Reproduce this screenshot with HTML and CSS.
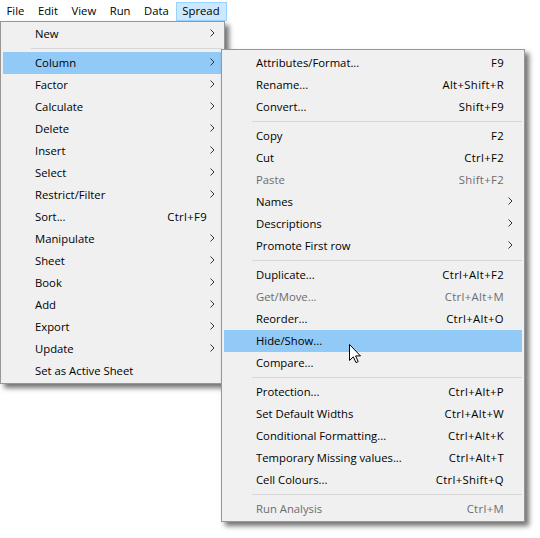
FILE: index.html
```html
<!DOCTYPE html>
<html>
<head>
<meta charset="utf-8">
<link rel="stylesheet" href="styles.css">
</head>
<body>
<div class="menubar">
  <div class="mb-item">File</div>
  <div class="mb-item">Edit</div>
  <div class="mb-item">View</div>
  <div class="mb-item">Run</div>
  <div class="mb-item">Data</div>
  <div class="mb-item active">Spread</div>
</div>

<div class="menu main">
  <div class="row"><span class="label">New</span><svg class="arrow" viewBox="0 0 5 8"><path d="M0.5 0.5 L4 4 L0.5 7.5"/></svg></div>
  <div class="sep"></div>
  <div class="row hl"><span class="label">Column</span><svg class="arrow" viewBox="0 0 5 8"><path d="M0.5 0.5 L4 4 L0.5 7.5"/></svg></div>
  <div class="row"><span class="label">Factor</span><svg class="arrow" viewBox="0 0 5 8"><path d="M0.5 0.5 L4 4 L0.5 7.5"/></svg></div>
  <div class="row"><span class="label">Calculate</span><svg class="arrow" viewBox="0 0 5 8"><path d="M0.5 0.5 L4 4 L0.5 7.5"/></svg></div>
  <div class="row"><span class="label">Delete</span><svg class="arrow" viewBox="0 0 5 8"><path d="M0.5 0.5 L4 4 L0.5 7.5"/></svg></div>
  <div class="row"><span class="label">Insert</span><svg class="arrow" viewBox="0 0 5 8"><path d="M0.5 0.5 L4 4 L0.5 7.5"/></svg></div>
  <div class="row"><span class="label">Select</span><svg class="arrow" viewBox="0 0 5 8"><path d="M0.5 0.5 L4 4 L0.5 7.5"/></svg></div>
  <div class="row"><span class="label">Restrict/Filter</span><svg class="arrow" viewBox="0 0 5 8"><path d="M0.5 0.5 L4 4 L0.5 7.5"/></svg></div>
  <div class="row"><span class="label">Sort...</span><span class="key">Ctrl+F9</span></div>
  <div class="row"><span class="label">Manipulate</span><svg class="arrow" viewBox="0 0 5 8"><path d="M0.5 0.5 L4 4 L0.5 7.5"/></svg></div>
  <div class="row"><span class="label">Sheet</span><svg class="arrow" viewBox="0 0 5 8"><path d="M0.5 0.5 L4 4 L0.5 7.5"/></svg></div>
  <div class="row"><span class="label">Book</span><svg class="arrow" viewBox="0 0 5 8"><path d="M0.5 0.5 L4 4 L0.5 7.5"/></svg></div>
  <div class="row"><span class="label">Add</span><svg class="arrow" viewBox="0 0 5 8"><path d="M0.5 0.5 L4 4 L0.5 7.5"/></svg></div>
  <div class="row"><span class="label">Export</span><svg class="arrow" viewBox="0 0 5 8"><path d="M0.5 0.5 L4 4 L0.5 7.5"/></svg></div>
  <div class="row"><span class="label">Update</span><svg class="arrow" viewBox="0 0 5 8"><path d="M0.5 0.5 L4 4 L0.5 7.5"/></svg></div>
  <div class="row"><span class="label">Set as Active Sheet</span></div>
</div>

<div class="menu sub">
  <div class="row"><span class="label">Attributes/Format...</span><span class="key">F9</span></div>
  <div class="row"><span class="label">Rename...</span><span class="key">Alt+Shift+R</span></div>
  <div class="row"><span class="label">Convert...</span><span class="key">Shift+F9</span></div>
  <div class="sep"></div>
  <div class="row"><span class="label">Copy</span><span class="key">F2</span></div>
  <div class="row"><span class="label">Cut</span><span class="key">Ctrl+F2</span></div>
  <div class="row dis"><span class="label">Paste</span><span class="key">Shift+F2</span></div>
  <div class="row"><span class="label">Names</span><svg class="arrow" viewBox="0 0 5 8"><path d="M0.5 0.5 L4 4 L0.5 7.5"/></svg></div>
  <div class="row"><span class="label">Descriptions</span><svg class="arrow" viewBox="0 0 5 8"><path d="M0.5 0.5 L4 4 L0.5 7.5"/></svg></div>
  <div class="row"><span class="label">Promote First row</span><svg class="arrow" viewBox="0 0 5 8"><path d="M0.5 0.5 L4 4 L0.5 7.5"/></svg></div>
  <div class="sep"></div>
  <div class="row"><span class="label">Duplicate...</span><span class="key">Ctrl+Alt+F2</span></div>
  <div class="row dis"><span class="label">Get/Move...</span><span class="key">Ctrl+Alt+M</span></div>
  <div class="row"><span class="label">Reorder...</span><span class="key">Ctrl+Alt+O</span></div>
  <div class="row hl"><span class="label">Hide/Show...</span></div>
  <div class="row"><span class="label">Compare...</span></div>
  <div class="sep"></div>
  <div class="row"><span class="label">Protection...</span><span class="key">Ctrl+Alt+P</span></div>
  <div class="row"><span class="label">Set Default Widths</span><span class="key">Ctrl+Alt+W</span></div>
  <div class="row"><span class="label">Conditional Formatting...</span><span class="key">Ctrl+Alt+K</span></div>
  <div class="row"><span class="label">Temporary Missing values...</span><span class="key">Ctrl+Alt+T</span></div>
  <div class="row"><span class="label">Cell Colours...</span><span class="key">Ctrl+Shift+Q</span></div>
  <div class="sep"></div>
  <div class="row dis"><span class="label">Run Analysis</span><span class="key">Ctrl+M</span></div>
</div>

<svg class="cursor" width="13" height="20" viewBox="0 0 13 20">
  <polygon points="0.5,0.5 0.5,16.5 4.3,12.8 7,18.6 9.2,17.6 6.6,11.9 11.5,11.9" fill="#fff" stroke="#000" stroke-width="1" stroke-linejoin="miter"/>
</svg>
</body>
</html>
```

FILE: styles.css
```css
html, body {
  margin: 0;
  padding: 0;
  background: #ffffff;
}

body {
  position: relative;
  width: 540px;
  height: 538px;
  overflow: hidden;
  font-family: "Open Sans", "Noto Sans", sans-serif;
  font-size: 11.3px;
  color: #000000;
}

.menubar {
  display: flex;
  height: 21px;
}

.mb-item {
  margin-top: 2px;
  height: 19px;
  box-sizing: border-box;
  border: 1px solid transparent;
  padding: 0 6px 2px 5.5px;
  line-height: 15px;
  white-space: nowrap;
}

.mb-item.active {
  background: #cce8ff;
  border-color: #99d1ff;
}

.menu {
  background: #f0f0f0;
  border: 1px solid #979797;
  box-sizing: border-box;
  box-shadow: 4px 4px 5px rgba(0, 0, 0, 0.55);
}

.main {
  width: 225px;
  padding: 1px 2px;
}

.sub {
  position: absolute;
  left: 221px;
  top: 49px;
  width: 304px;
  padding: 2px 2px 1px;
}

.row {
  display: flex;
  align-items: center;
  height: 22px;
  box-sizing: border-box;
  padding: 0 15px 2px 32px;
  white-space: nowrap;
}

.sub .row {
  padding-right: 18px;
}

.row .label {
  flex: 1;
}

.row .key {
  letter-spacing: 0.35px;
}

.row.hl {
  background: #91c9f7;
}

.row.dis {
  color: #6d6d6d;
}

.arrow {
  width: 5px;
  height: 8px;
  margin-right: -8px;
  flex: none;
}

.sub .arrow {
  margin-right: -9px;
}

.arrow path {
  fill: none;
  stroke: #333333;
  stroke-width: 1;
}

.sep {
  height: 1px;
  background: #d7d7d7;
  margin: 3px 0 3px 28px;
}

.cursor {
  position: absolute;
  left: 348.5px;
  top: 343.5px;
}
```
